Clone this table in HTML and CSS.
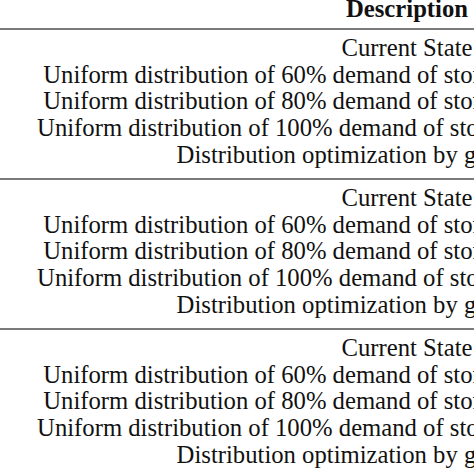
FILE: index.html
```
<!DOCTYPE html>
<html lang="en">
<head>
<meta charset="utf-8">
<title>Scenario descriptions</title>
<link rel="stylesheet" href="styles.css">
</head>
<body>
<div class="table">
  <div class="head"><span class="cell">Description</span></div>
  <div class="group">
    <div class="cell">Current State</div>
    <div class="cell">Uniform distribution of 60% demand of stores among distribution centers</div>
    <div class="cell">Uniform distribution of 80% demand of stores among distribution centers</div>
    <div class="cell">Uniform distribution of 100% demand of stores among distribution centers</div>
    <div class="cell">Distribution optimization by genetic algorithm</div>
  </div>
  <div class="group">
    <div class="cell">Current State</div>
    <div class="cell">Uniform distribution of 60% demand of stores among distribution centers</div>
    <div class="cell">Uniform distribution of 80% demand of stores among distribution centers</div>
    <div class="cell">Uniform distribution of 100% demand of stores among distribution centers</div>
    <div class="cell">Distribution optimization by genetic algorithm</div>
  </div>
  <div class="group">
    <div class="cell">Current State</div>
    <div class="cell">Uniform distribution of 60% demand of stores among distribution centers</div>
    <div class="cell">Uniform distribution of 80% demand of stores among distribution centers</div>
    <div class="cell">Uniform distribution of 100% demand of stores among distribution centers</div>
    <div class="cell">Distribution optimization by genetic algorithm</div>
  </div>
</div>
</body>
</html>
```
FILE: styles.css
```
html, body {
  margin: 0;
  padding: 0;
  background: #ffffff;
  overflow: hidden;
}

.table {
  width: 814px;
  font-family: "Liberation Serif", "Times New Roman", serif;
  font-size: 24.7px;
  color: #111111;
}

.cell {
  display: block;
  text-align: center;
  white-space: nowrap;
}

.head {
  line-height: 17px;
  padding-bottom: 11px;
  font-weight: bold;
}

.group {
  border-top: 2px solid #7a7a7a;
  padding-top: 5px;
  padding-bottom: 9.5px;
  line-height: 26.7px;
}
```
